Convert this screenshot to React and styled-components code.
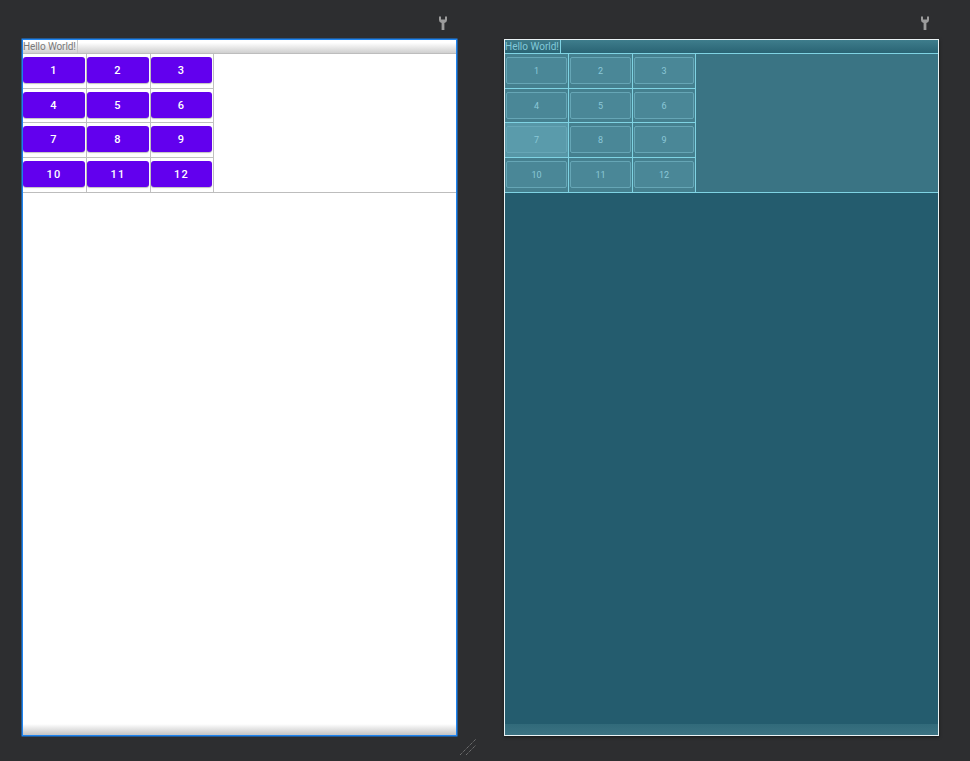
import React from "react"
import styled, { createGlobalStyle } from "styled-components"

const GlobalStyle = createGlobalStyle`
  html, body {
    margin: 0;
    padding: 0;
    background: #2d2e30;
  }
  body {
    font-family: Roboto, "Liberation Sans", sans-serif;
  }
`

const Stage = styled.div`
  width: 970px;
  height: 761px;
  box-sizing: border-box;
  padding: 14px 0 0 22px;
  display: flex;
  gap: 47px;
  position: relative;
  overflow: hidden;
`

const Column = styled.div`
  display: flex;
  flex-direction: column;
  width: 435px;
`

const ToolRow = styled.div`
  height: 25px;
  display: flex;
  justify-content: flex-end;
  align-items: flex-start;
  padding-right: 9px;
  box-sizing: border-box;
  svg {
    margin-top: 2px;
  }
`

const Device = styled.div`
  height: 697px;
  box-sizing: border-box;
  border: 1px solid ${p => (p.blueprint ? "#eaf3f5" : "#1e84f0")};
  background: ${p => (p.blueprint ? "#245c6e" : "#ffffff")};
  display: flex;
  flex-direction: column;
  box-shadow: ${p => (p.blueprint ? "0 1px 3px rgba(0,0,0,0.5)" : "0 0 0 0.5px #1e84f0")};
`

const TitleBar = styled.div`
  height: 13px;
  display: flex;
  border-bottom: 1px solid ${p => (p.blueprint ? "#7fd3e3" : "#bdbdbd")};
  background: ${p =>
    p.blueprint
      ? "linear-gradient(#3e7d8c, #2a6474)"
      : "linear-gradient(#ffffff 20%, #cfcfcf)"};
`

const TitleText = styled.div`
  height: 13px;
  line-height: 13px;
  font-size: 10px;
  letter-spacing: ${p => (p.blueprint ? "0" : "-0.1px")};
  padding-right: 1px;
  color: ${p => (p.blueprint ? "#82c9d9" : "#7a7a7a")};
  border-right: 1px solid ${p => (p.blueprint ? "#7fd3e3" : "#c8c8c8")};
  white-space: nowrap;
`

const GridArea = styled.div`
  display: flex;
  border-bottom: 1px solid ${p => (p.blueprint ? "#7fd3e3" : "#bdbdbd")};
  background: ${p => (p.blueprint ? "#3a7484" : "#ffffff")};
`

const Grid = styled.div`
  display: grid;
  grid-template-columns: 64px 64px 63px;
  grid-template-rows: 35px 34px 35px 34px;
`

const Cell = styled.div`
  box-sizing: border-box;
  border-right: 1px solid ${p => (p.blueprint ? "#7fd3e3" : "#c0c0c0")};
  border-bottom: ${p =>
    p.last ? "none" : `1px solid ${p.blueprint ? "#7fd3e3" : "#c0c0c0"}`};
  padding: ${p => (p.blueprint ? "3px 1px 3px 1px" : "3px 1px 0 0")};
  background: ${p =>
    p.blueprint ? (p.hot ? "#5797a7" : "#45808f") : "transparent"};
`

const PhoneButton = styled.div`
  height: 26px;
  border-radius: 3px;
  background: #6200ee;
  color: #ffffff;
  font-size: 11px;
  font-weight: 500;
  letter-spacing: 1.2px;
  display: flex;
  align-items: center;
  justify-content: center;
  box-shadow: 0 1px 1px rgba(0, 0, 0, 0.25);
`

const GhostButton = styled.div`
  height: 27px;
  box-sizing: border-box;
  border: 1px solid #66a6b6;
  border-radius: 2px;
  background: ${p => (p.hot ? "#5a9bab" : "#4a8797")};
  color: #8ac8d7;
  font-size: 9px;
  display: flex;
  align-items: center;
  justify-content: center;
`

const Body = styled.div`
  flex: 1;
`

const BottomFade = styled.div`
  height: 11px;
  background: ${p =>
    p.blueprint
      ? "linear-gradient(#316a7a, #3b7282)"
      : "linear-gradient(#ffffff, #c4c4c4)"};
`

const Handle = styled.svg`
  position: absolute;
  left: 459px;
  top: 737px;
`

const Wrench = () => (
  <svg width="10" height="15" viewBox="0 0 10 15">
    <path
      d="M1 0.5 L1 4 Q1 6.5 3.6 7 L3.6 14 L6.4 14 L6.4 7 Q9 6.5 9 4 L9 0.5 L7 0.5 L7 3.5 L3 3.5 L3 0.5 Z"
      fill="#9c9c9c"
    />
  </svg>
)

const labels = ["1", "2", "3", "4", "5", "6", "7", "8", "9", "10", "11", "12"]

const Preview = ({ blueprint }) => (
  <Column>
    <ToolRow>
      <Wrench />
    </ToolRow>
    <Device blueprint={blueprint}>
      <TitleBar blueprint={blueprint}>
        <TitleText blueprint={blueprint}>Hello World!</TitleText>
      </TitleBar>
      <GridArea blueprint={blueprint}>
        <Grid>
          {labels.map((label, i) => (
            <Cell
              key={label}
              blueprint={blueprint}
              last={i >= 9}
              hot={blueprint && label === "7"}
            >
              {blueprint ? (
                <GhostButton hot={label === "7"}>{label}</GhostButton>
              ) : (
                <PhoneButton>{label}</PhoneButton>
              )}
            </Cell>
          ))}
        </Grid>
      </GridArea>
      <Body />
      <BottomFade blueprint={blueprint} />
    </Device>
  </Column>
)

export default function App() {
  return (
    <>
      <GlobalStyle />
      <Stage>
        <Preview />
        <Preview blueprint />
        <Handle width="20" height="20" viewBox="0 0 20 20">
          <line x1="1" y1="18" x2="17" y2="2" stroke="#8a8a8a" strokeWidth="1" strokeDasharray="1 1" />
          <line x1="7" y1="18" x2="17" y2="8" stroke="#8a8a8a" strokeWidth="1" strokeDasharray="1 1" />
        </Handle>
      </Stage>
    </>
  )
}
